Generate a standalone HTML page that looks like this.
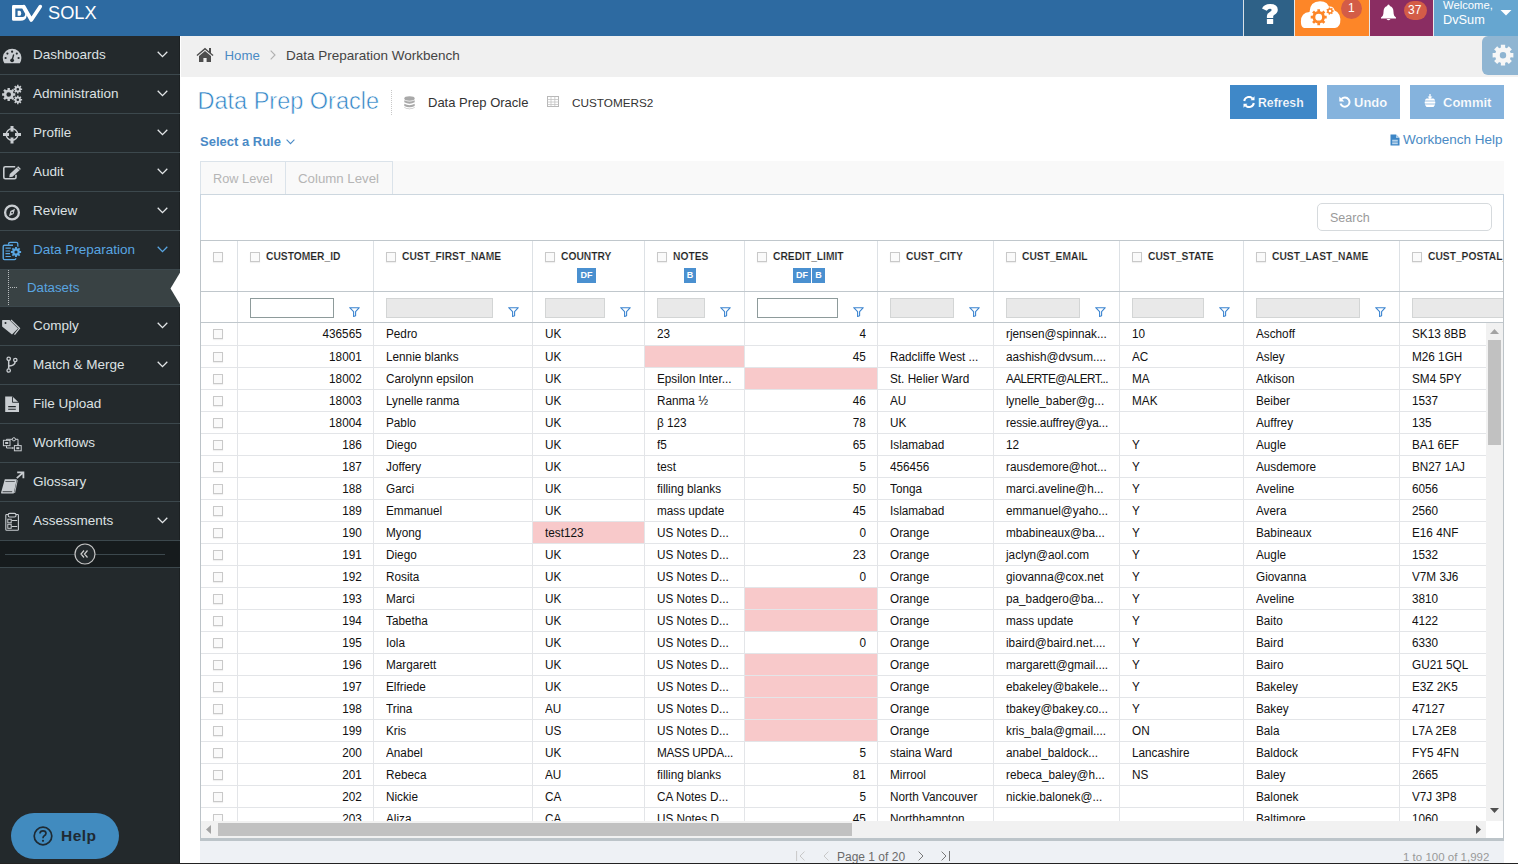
<!DOCTYPE html><html><head><meta charset="utf-8"><style>
*{box-sizing:border-box;margin:0;padding:0}
html,body{width:1518px;height:864px;overflow:hidden;background:#fff;font-family:"Liberation Sans",sans-serif;position:relative}
.abs{position:absolute}
svg{display:block}
.si{position:absolute;left:0;width:180px;height:39px;border-bottom:1px solid #3c484d;color:#dde1e3;font-size:13.5px}
.si .t{position:absolute;left:33px;top:11px;line-height:16px;white-space:nowrap}
.si .ch{position:absolute;left:157px;top:15px}
.si .ic{position:absolute}
.tx{position:absolute;white-space:nowrap;line-height:1}
.c{position:absolute;font-size:12.5px;color:#111;white-space:nowrap;line-height:14px}
.c span{display:inline-block;transform:scaleX(0.94);transform-origin:0 0}
.c.r span{transform-origin:100% 0}
.vb{position:absolute;top:241px;width:1px;background:#dde1e5}
.hb{position:absolute;left:201px;height:1px;background:#dfe2e5}
.cb{position:absolute;width:10px;height:10px;border:1px solid #c9c9c9;background:#fafafa;box-shadow:0 1px 1px rgba(0,0,0,0.06)}
.fi{position:absolute;top:298px;height:20px;border:1px solid #d3d5d5;background:#e9e9e9}
.fi.on{background:#fff;border-color:#8e9b9b}
.hd{position:absolute;top:252px;font-size:10.25px;font-weight:bold;color:#222;white-space:nowrap;line-height:10px;-webkit-text-stroke:0.15px #fff}
.bdg{position:absolute;top:268px;height:15px;background:#4a90d0;color:#fff;font-size:9px;font-weight:bold;line-height:15px;text-align:center}
.pink{position:absolute;background:#f8c9ca}
</style></head><body>
<div class="abs" style="left:0;top:0;width:1518px;height:36px;background:#2d6aa1"></div>
<svg class="abs" style="left:10px;top:3px" width="35" height="20" viewBox="0 0 35 20">
<path d="M2 3.4 Q2 2 3.4 2 H13 L16.5 8.5 L16.8 12.5 Q16 17.8 10.5 17.8 H3.4 Q2 17.8 2 16.4 Z" fill="#fff"/>
<path d="M5.3 5.6 H12.3 L15.2 10.8 Q15.2 14.1 12.5 14.1 H5.3 Z" fill="#2d6aa1"/>
<path d="M7.6 7.7 H9.8 Q11.2 7.7 11.2 10.2 Q11.2 12.7 9.8 12.7 H7.6 Z" fill="#fff"/>
<path d="M13.8 3.6 L21.3 17 L30.3 3.6" fill="none" stroke="#fff" stroke-width="3.6" stroke-linecap="round" stroke-linejoin="round"/>
</svg>
<div class="tx" style="left:48px;top:3px;font-size:18.25px;color:#fff;line-height:20px">SOLX</div>
<div class="abs" style="left:1243px;top:0;width:1px;height:36px;background:#d8e0e6"></div>
<div class="abs" style="left:1244px;top:0;width:50px;height:36px;background:#2e6187"></div>
<div class="abs" style="left:1294px;top:0;width:1px;height:36px;background:#e8e8e8"></div>
<div class="abs" style="left:1295px;top:0;width:74px;height:36px;background:#fd8628"></div>
<div class="abs" style="left:1369px;top:0;width:1px;height:36px;background:#e8e8e8"></div>
<div class="abs" style="left:1370px;top:0;width:63px;height:36px;background:#8a2d62"></div>
<div class="abs" style="left:1433px;top:0;width:1px;height:36px;background:#e8e8e8"></div>
<div class="abs" style="left:1434px;top:0;width:84px;height:36px;background:#66a6d0"></div>
<svg class="abs" style="left:1261px;top:3px" width="18" height="22" viewBox="0 0 18 22"><path d="M1 5.5 Q3 0.9 9 0.9 Q16.8 0.9 16.8 6.8 Q16.8 10 13.5 11.8 Q12.2 12.5 12.2 13.5 V15 H5.9 V13 Q5.9 10.6 8.5 9.3 Q10.6 8.2 10.6 7.1 Q10.6 5.8 8.9 5.8 Q7.2 5.8 5.7 7.8 Z" fill="#fff"/><rect x="5.9" y="16" width="6.3" height="5" rx="0.5" fill="#fff"/></svg>
<svg class="abs" style="left:1300px;top:0px" width="42" height="30" viewBox="0 0 42 30">
<path d="M4 27.9 Q0.9 27.5 0.9 21.5 Q0.9 12.5 9.5 11.9 Q10 1.2 20 1.2 Q28.5 1.2 29.7 9.5 Q39.5 9.8 40.4 19 Q40.6 27.5 35 27.9 Z" fill="#fff"/>
<path d="M24.76 15.87 L26.69 15.85 L26.69 18.55 L24.76 18.53 L24.43 19.57 L23.92 20.54 L25.30 21.90 L23.40 23.80 L22.04 22.42 L21.07 22.93 L20.03 23.26 L20.05 25.19 L17.35 25.19 L17.37 23.26 L16.33 22.93 L15.36 22.42 L14.00 23.80 L12.10 21.90 L13.48 20.54 L12.97 19.57 L12.64 18.53 L10.71 18.55 L10.71 15.85 L12.64 15.87 L12.97 14.83 L13.48 13.86 L12.10 12.50 L14.00 10.60 L15.36 11.98 L16.33 11.47 L17.37 11.14 L17.35 9.21 L20.05 9.21 L20.03 11.14 L21.07 11.47 L22.04 11.98 L23.40 10.60 L25.30 12.50 L23.92 13.86 L24.43 14.83 Z M22.10 17.20 A3.4 3.4 0 1 0 15.30 17.20 A3.4 3.4 0 1 0 22.10 17.20 Z" fill="#fd8628" fill-rule="evenodd"/>
<circle cx="30" cy="11" r="4.6" fill="#fff"/>
<path d="M32.70 10.25 L33.62 10.23 L33.62 11.77 L32.70 11.75 L32.52 12.21 L32.27 12.64 L32.86 13.35 L31.65 14.31 L31.09 13.58 L30.62 13.73 L30.13 13.80 L29.95 14.70 L28.44 14.36 L28.67 13.46 L28.25 13.19 L27.90 12.85 L27.07 13.26 L26.41 11.88 L27.24 11.49 L27.20 11.00 L27.24 10.51 L26.41 10.12 L27.07 8.74 L27.90 9.15 L28.25 8.81 L28.67 8.54 L28.44 7.64 L29.95 7.30 L30.13 8.20 L30.62 8.27 L31.09 8.42 L31.65 7.69 L32.86 8.65 L32.27 9.36 L32.52 9.79 Z M31.30 11.00 A1.3 1.3 0 1 0 28.70 11.00 A1.3 1.3 0 1 0 31.30 11.00 Z" fill="#fd8628" fill-rule="evenodd"/>
</svg>
<div class="abs" style="left:1341px;top:-2px;width:21px;height:21px;border-radius:50%;background:#d35c47"></div>
<div class="tx" style="left:1348px;top:2px;font-size:12px;color:#fff;line-height:12px">1</div>
<svg class="abs" style="left:1380px;top:4px" width="17" height="17" viewBox="0 0 17 17">
<path d="M8.5 0.5 Q9.8 0.5 9.8 2 Q13.5 3 13.5 8 Q13.5 12 16 13.5 V14.5 H1 V13.5 Q3.5 12 3.5 8 Q3.5 3 7.2 2 Q7.2 0.5 8.5 0.5 Z" fill="#fff"/>
<path d="M6.5 15 Q8.5 17.5 10.5 15 Z" fill="#fff"/></svg>
<div class="abs" style="left:1404px;top:1px;width:23px;height:19px;border-radius:9.5px;background:#d35c47"></div>
<div class="tx" style="left:1408px;top:4px;font-size:12px;color:#fff;line-height:12px">37</div>
<div class="tx" style="left:1443px;top:-1px;font-size:11.25px;color:#fff;line-height:12px">Welcome,</div>
<div class="tx" style="left:1443px;top:13px;font-size:12.75px;color:#fff;line-height:13px">DvSum</div>
<svg class="abs" style="left:1500px;top:10px" width="12" height="6" viewBox="0 0 12 6"><path d="M0.5 0 H11.5 L6 5.5 Z" fill="#fff"/></svg>
<div class="abs" style="left:0;top:36px;width:180px;height:828px;background:#23292c"></div>
<div class="abs" style="left:179px;top:36px;width:1px;height:828px;background:#1c2123"></div>
<div class="si" style="top:36px;height:39px;color:#dde1e3"><span class="t">Dashboards</span><span class="ch"><svg width="11" height="7" viewBox="0 0 11 7"><path d="M0.7 0.7 L5.5 5.6 L10.3 0.7" fill="none" stroke="#e3e6e8" stroke-width="1.3"/></svg></span></div>
<div class="si" style="top:75px;height:39px;color:#dde1e3"><span class="t">Administration</span><span class="ch"><svg width="11" height="7" viewBox="0 0 11 7"><path d="M0.7 0.7 L5.5 5.6 L10.3 0.7" fill="none" stroke="#e3e6e8" stroke-width="1.3"/></svg></span></div>
<div class="si" style="top:114px;height:39px;color:#dde1e3"><span class="t">Profile</span><span class="ch"><svg width="11" height="7" viewBox="0 0 11 7"><path d="M0.7 0.7 L5.5 5.6 L10.3 0.7" fill="none" stroke="#e3e6e8" stroke-width="1.3"/></svg></span></div>
<div class="si" style="top:153px;height:39px;color:#dde1e3"><span class="t">Audit</span><span class="ch"><svg width="11" height="7" viewBox="0 0 11 7"><path d="M0.7 0.7 L5.5 5.6 L10.3 0.7" fill="none" stroke="#e3e6e8" stroke-width="1.3"/></svg></span></div>
<div class="si" style="top:192px;height:39px;color:#dde1e3"><span class="t">Review</span><span class="ch"><svg width="11" height="7" viewBox="0 0 11 7"><path d="M0.7 0.7 L5.5 5.6 L10.3 0.7" fill="none" stroke="#e3e6e8" stroke-width="1.3"/></svg></span></div>
<div class="si" style="top:231px;height:39px;color:#59a6e2"><span class="t">Data Preparation</span><span class="ch"><svg width="11" height="7" viewBox="0 0 11 7"><path d="M0.7 0.7 L5.5 5.6 L10.3 0.7" fill="none" stroke="#59a6e2" stroke-width="1.3"/></svg></span></div>
<div class="abs" style="left:0;top:270px;width:180px;height:37px;background:#394244;border-bottom:1px solid #3c484d"></div>
<div class="abs" style="left:8px;top:270px;width:1px;height:36px;background:repeating-linear-gradient(to bottom,#b8bcbe 0 1px,transparent 1px 2px)"></div>
<div class="abs" style="left:10px;top:287px;width:8px;height:1px;background:repeating-linear-gradient(to right,#b8bcbe 0 1px,transparent 1px 2px)"></div>
<div class="tx" style="left:27px;top:281px;font-size:13.25px;color:#59a6e2;line-height:14px">Datasets</div>
<svg class="abs" style="left:170px;top:271px" width="11" height="35" viewBox="0 0 11 35"><path d="M11 0 L0.5 17.5 L11 35 Z" fill="#fff"/></svg>
<div class="si" style="top:307px;height:39px;color:#dde1e3"><span class="t">Comply</span><span class="ch"><svg width="11" height="7" viewBox="0 0 11 7"><path d="M0.7 0.7 L5.5 5.6 L10.3 0.7" fill="none" stroke="#e3e6e8" stroke-width="1.3"/></svg></span></div>
<div class="si" style="top:346px;height:39px;color:#dde1e3"><span class="t">Match &amp; Merge</span><span class="ch"><svg width="11" height="7" viewBox="0 0 11 7"><path d="M0.7 0.7 L5.5 5.6 L10.3 0.7" fill="none" stroke="#e3e6e8" stroke-width="1.3"/></svg></span></div>
<div class="si" style="top:385px;height:39px;color:#dde1e3"><span class="t">File Upload</span></div>
<div class="si" style="top:424px;height:39px;color:#dde1e3"><span class="t">Workflows</span></div>
<div class="si" style="top:463px;height:39px;color:#dde1e3"><span class="t">Glossary</span></div>
<div class="si" style="top:502px;height:39px;color:#dde1e3"><span class="t">Assessments</span><span class="ch"><svg width="11" height="7" viewBox="0 0 11 7"><path d="M0.7 0.7 L5.5 5.6 L10.3 0.7" fill="none" stroke="#e3e6e8" stroke-width="1.3"/></svg></span></div>
<div class="abs" style="left:0;top:541px;width:180px;height:26px;background:#161b1d"></div>
<div class="abs" style="left:0;top:567px;width:180px;height:1px;background:#3c484d"></div>
<div class="abs" style="left:5px;top:554px;width:160px;height:1px;background:#3c484d"></div>
<svg class="abs" style="left:74px;top:543px" width="22" height="22" viewBox="0 0 22 22"><circle cx="11" cy="11" r="10" fill="#23292c" stroke="#c4c4c4" stroke-width="1.2"/><path d="M10 7.5 L7 11 L10 14.5 M13.5 7.5 L10.5 11 L13.5 14.5" fill="none" stroke="#d0d0d0" stroke-width="1.2"/></svg>
<svg class="abs" style="left:0;top:44px" width="26" height="26" viewBox="0 44 26 26"><path d="M4.4 63.2 A9.3 9.3 0 1 1 19.8 63.2 Z" fill="#c9cdd1"/>
<circle cx="12.1" cy="51.7" r="1.1" fill="#23292c"/><circle cx="7.4" cy="53.6" r="1.1" fill="#23292c"/><circle cx="16.8" cy="53.6" r="1.1" fill="#23292c"/>
<circle cx="5.6" cy="58" r="1.1" fill="#23292c"/><circle cx="18.6" cy="58" r="1.1" fill="#23292c"/>
<path d="M13.7 54.5 L12.3 59.5" stroke="#23292c" stroke-width="1.3"/><circle cx="12.1" cy="60.3" r="1.9" fill="#23292c"/></svg>
<svg class="abs" style="left:0;top:82px" width="26" height="26" viewBox="0 82 26 26"><path d="M13.46 93.35 L15.29 93.28 L15.29 95.72 L13.46 95.65 L13.23 96.38 L12.88 97.05 L14.22 98.29 L12.49 100.02 L11.25 98.68 L10.58 99.03 L9.85 99.26 L9.92 101.09 L7.48 101.09 L7.55 99.26 L6.82 99.03 L6.15 98.68 L4.91 100.02 L3.18 98.29 L4.52 97.05 L4.17 96.38 L3.94 95.65 L2.11 95.72 L2.11 93.28 L3.94 93.35 L4.17 92.62 L4.52 91.95 L3.18 90.71 L4.91 88.98 L6.15 90.32 L6.82 89.97 L7.55 89.74 L7.48 87.91 L9.92 87.91 L9.85 89.74 L10.58 89.97 L11.25 90.32 L12.49 88.98 L14.22 90.71 L12.88 91.95 L13.23 92.62 Z M11.00 94.50 A2.3 2.3 0 1 0 6.40 94.50 A2.3 2.3 0 1 0 11.00 94.50 Z" fill="#c9cdd1" fill-rule="evenodd"/><path d="M20.91 88.45 L22.13 88.40 L22.13 90.00 L20.91 89.95 L20.76 90.42 L20.53 90.87 L21.43 91.69 L20.29 92.83 L19.47 91.93 L19.02 92.16 L18.55 92.31 L18.60 93.53 L17.00 93.53 L17.05 92.31 L16.58 92.16 L16.13 91.93 L15.31 92.83 L14.17 91.69 L15.07 90.87 L14.84 90.42 L14.69 89.95 L13.47 90.00 L13.47 88.40 L14.69 88.45 L14.84 87.98 L15.07 87.53 L14.17 86.71 L15.31 85.57 L16.13 86.47 L16.58 86.24 L17.05 86.09 L17.00 84.87 L18.60 84.87 L18.55 86.09 L19.02 86.24 L19.47 86.47 L20.29 85.57 L21.43 86.71 L20.53 87.53 L20.76 87.98 Z M19.10 89.20 A1.3 1.3 0 1 0 16.50 89.20 A1.3 1.3 0 1 0 19.10 89.20 Z" fill="#c9cdd1" fill-rule="evenodd"/><path d="M20.91 99.05 L22.13 99.00 L22.13 100.60 L20.91 100.55 L20.76 101.02 L20.53 101.47 L21.43 102.29 L20.29 103.43 L19.47 102.53 L19.02 102.76 L18.55 102.91 L18.60 104.13 L17.00 104.13 L17.05 102.91 L16.58 102.76 L16.13 102.53 L15.31 103.43 L14.17 102.29 L15.07 101.47 L14.84 101.02 L14.69 100.55 L13.47 100.60 L13.47 99.00 L14.69 99.05 L14.84 98.58 L15.07 98.13 L14.17 97.31 L15.31 96.17 L16.13 97.07 L16.58 96.84 L17.05 96.69 L17.00 95.47 L18.60 95.47 L18.55 96.69 L19.02 96.84 L19.47 97.07 L20.29 96.17 L21.43 97.31 L20.53 98.13 L20.76 98.58 Z M19.10 99.80 A1.3 1.3 0 1 0 16.50 99.80 A1.3 1.3 0 1 0 19.10 99.80 Z" fill="#c9cdd1" fill-rule="evenodd"/></svg>
<svg class="abs" style="left:0;top:122px" width="26" height="26" viewBox="0 122 26 26"><circle cx="12" cy="134.5" r="5.8" fill="none" stroke="#c9cdd1" stroke-width="1.4"/>
<rect x="10.5" y="126" width="3" height="5.6" fill="#c9cdd1"/><rect x="10.5" y="137.5" width="3" height="6" fill="#c9cdd1"/>
<rect x="3" y="133" width="6" height="3" fill="#c9cdd1"/><rect x="15" y="133" width="6" height="3" fill="#c9cdd1"/>
<circle cx="12" cy="134.5" r="2.6" fill="#23292c"/></svg>
<svg class="abs" style="left:0;top:160px" width="26" height="26" viewBox="0 160 26 26"><path d="M15.2 166.8 H5.3 Q3.8 166.8 3.8 168.3 V177.3 Q3.8 178.8 5.3 178.8 H14.5 Q16 178.8 16 177.3 V174.8" fill="none" stroke="#c9cdd1" stroke-width="1.6"/>
<path d="M9.2 177.3 L9.8 174 L18.2 166.2 L20.9 168.9 L12.5 176.7 Z" fill="#c9cdd1"/>
<path d="M17 167.4 L19.7 170.1" stroke="#23292c" stroke-width="0.7"/></svg>
<svg class="abs" style="left:0;top:198px" width="26" height="26" viewBox="0 198 26 26"><circle cx="12" cy="212.5" r="6.9" fill="none" stroke="#c9cdd1" stroke-width="2.3"/>
<path d="M15 208.8 L13.6 214 L9 216.2 L10.4 211 Z" fill="#c9cdd1"/><circle cx="12.1" cy="212.6" r="0.9" fill="#23292c"/></svg>
<svg class="abs" style="left:0;top:237px" width="26" height="26" viewBox="0 237 26 26"><path d="M8.6 244.8 V243.8 Q8.6 242.3 10.1 242.3 H16.3 Q17.8 242.3 17.8 243.8 V247" fill="none" stroke="#59a6e2" stroke-width="1.3"/>
<path d="M13 245.2 H4.5 Q3.2 245.2 3.2 246.5 V258.3 Q3.2 259.6 4.5 259.6 H14.5 Q15.8 259.6 15.8 258.3" fill="none" stroke="#59a6e2" stroke-width="1.4"/>
<path d="M5.5 248.2 H10.8 M5.5 251 H10 M5.5 253.6 H10 M5.5 256.5 H10.8" stroke="#59a6e2" stroke-width="1.2"/>
<circle cx="16" cy="252" r="5.8" fill="#23292c"/><path d="M19.69 251.11 L21.11 251.05 L21.11 252.95 L19.69 252.89 L19.51 253.45 L19.24 253.98 L20.29 254.94 L18.94 256.29 L17.98 255.24 L17.45 255.51 L16.89 255.69 L16.95 257.11 L15.05 257.11 L15.11 255.69 L14.55 255.51 L14.02 255.24 L13.06 256.29 L11.71 254.94 L12.76 253.98 L12.49 253.45 L12.31 252.89 L10.89 252.95 L10.89 251.05 L12.31 251.11 L12.49 250.55 L12.76 250.02 L11.71 249.06 L13.06 247.71 L14.02 248.76 L14.55 248.49 L15.11 248.31 L15.05 246.89 L16.95 246.89 L16.89 248.31 L17.45 248.49 L17.98 248.76 L18.94 247.71 L20.29 249.06 L19.24 250.02 L19.51 250.55 Z M17.60 252.00 A1.6 1.6 0 1 0 14.40 252.00 A1.6 1.6 0 1 0 17.60 252.00 Z" fill="#59a6e2" fill-rule="evenodd"/></svg>
<svg class="abs" style="left:0;top:313px" width="26" height="26" viewBox="0 313 26 26"><path d="M2.1 320.5 Q2.1 319.9 2.7 319.9 H9.5 L18 328.4 L12 334.6 L2.1 326.6 Z" fill="#c9cdd1"/>
<circle cx="5.5" cy="323" r="1" fill="#23292c"/>
<path d="M11 320 L19.5 328.4 L14.5 334.6" fill="none" stroke="#c9cdd1" stroke-width="1.3"/></svg>
<svg class="abs" style="left:0;top:351px" width="26" height="26" viewBox="0 351 26 26"><circle cx="8.7" cy="358.8" r="1.7" fill="none" stroke="#c9cdd1" stroke-width="1.3"/>
<circle cx="15.3" cy="360" r="1.7" fill="none" stroke="#c9cdd1" stroke-width="1.3"/>
<circle cx="8.7" cy="370.5" r="1.7" fill="none" stroke="#c9cdd1" stroke-width="1.3"/>
<path d="M8.7 360.5 V368.8 M15.1 361.7 Q15 365.5 9 366" fill="none" stroke="#c9cdd1" stroke-width="1.5"/></svg>
<svg class="abs" style="left:0;top:391px" width="26" height="26" viewBox="0 391 26 26"><path d="M5.2 396.6 H12.5 L19 402.8 V412.1 H5.2 Z" fill="#c9cdd1"/>
<path d="M12.5 396.6 V402.3 H19" fill="none" stroke="#23292c" stroke-width="0.9"/>
<path d="M8.2 406.6 H15.8 M8.2 409.3 H15.8" stroke="#23292c" stroke-width="1.1"/></svg>
<svg class="abs" style="left:0;top:430px" width="26" height="26" viewBox="0 430 26 26"><rect x="3.4" y="440.3" width="6.6" height="5.4" fill="none" stroke="#c9cdd1" stroke-width="1"/>
<rect x="5.2" y="442" width="3" height="2" fill="#c9cdd1"/>
<rect x="14.4" y="445.6" width="6.8" height="5.2" fill="none" stroke="#c9cdd1" stroke-width="1"/>
<rect x="16.3" y="447.2" width="3" height="2" fill="#c9cdd1"/>
<circle cx="13.9" cy="439.3" r="1.6" fill="none" stroke="#c9cdd1" stroke-width="1"/>
<path d="M6.5 440.3 V439.3 H12.3 M15.5 439.3 H18 V444.5 M6.5 445.7 V448 H13.2" fill="none" stroke="#c9cdd1" stroke-width="1"/>
<path d="M16.8 443.7 L18 445.4 L19.2 443.7 Z M12.4 446.8 L14.1 448 L12.4 449.2 Z" fill="#c9cdd1"/></svg>
<svg class="abs" style="left:0;top:469px" width="26" height="26" viewBox="0 469 26 26"><path d="M4.8 479.2 H16.8 L13.7 493.6 H1.7 Q0.8 493.6 1.1 492.6 Z" fill="#c9cdd1"/>
<path d="M17.3 480.3 L14.6 493" stroke="#c9cdd1" stroke-width="0.9"/>
<path d="M5.4 481.5 H14.8 M2.6 491.6 H12.2" stroke="#5c6064" stroke-width="1.2"/>
<path d="M16.8 478.2 L23 472.6 M17.2 472.3 H23.4 V478.2" fill="none" stroke="#c9cdd1" stroke-width="1.8"/></svg>
<svg class="abs" style="left:0;top:509px" width="26" height="26" viewBox="0 509 26 26"><rect x="5.8" y="514.5" width="12.6" height="15.8" rx="0.8" fill="none" stroke="#c9cdd1" stroke-width="1.1"/>
<rect x="8.2" y="513.4" width="7.8" height="3.6" rx="1.5" fill="#23292c" stroke="#c9cdd1" stroke-width="1.1"/>
<rect x="7.8" y="519.2" width="3.4" height="3.6" fill="none" stroke="#c9cdd1" stroke-width="1"/>
<rect x="7.8" y="524.3" width="3.4" height="4" fill="none" stroke="#c9cdd1" stroke-width="1"/>
<path d="M11.6 520.5 H17.2 M11.6 526.5 H17.2" stroke="#c9cdd1" stroke-width="1"/></svg>
<div class="abs" style="left:11px;top:813px;width:108px;height:46px;border-radius:23px;background:#418bbf"></div>
<svg class="abs" style="left:33px;top:826px" width="20" height="20" viewBox="0 0 20 20"><circle cx="10" cy="10" r="8.8" fill="none" stroke="#1e2a33" stroke-width="1.7"/><path d="M7 7.5 Q7 4.8 10 4.8 Q13 4.8 13 7.3 Q13 9 11 10 Q10 10.5 10 12.3" fill="none" stroke="#1e2a33" stroke-width="1.7"/><circle cx="10" cy="14.8" r="1.1" fill="#1e2a33"/></svg>
<div class="tx" style="left:61px;top:828px;font-size:15.5px;font-weight:bold;color:#1e2a33;line-height:16px;letter-spacing:0.5px">Help</div>
<div class="abs" style="left:180px;top:36px;width:1px;height:828px;background:#fff"></div>
<div class="abs" style="left:181px;top:36px;width:1337px;height:41px;background:#f0f0f0"></div>
<svg class="abs" style="left:196px;top:47px" width="18" height="15" viewBox="0 0 18 15"><path d="M0.5 8 L9 0.8 L13 4.2 V1 H15 V5.9 L17.5 8 L16.6 9 L9 2.7 L1.4 9 Z" fill="#4d4d4d"/><path d="M3 9 L9 4 L15 9 V15 H10.6 V11 H7.4 V15 H3 Z" fill="#4d4d4d"/></svg>
<div class="tx" style="left:224.5px;top:49px;font-size:13.25px;color:#4a8ac4;line-height:14px">Home</div>
<svg class="abs" style="left:270px;top:50px" width="6" height="10" viewBox="0 0 6 10"><path d="M0.7 0.7 L5 5 L0.7 9.3" fill="none" stroke="#b0b0b0" stroke-width="1.1"/></svg>
<div class="tx" style="left:286px;top:49px;font-size:13.5px;color:#444;line-height:14px">Data Preparation Workbench</div>
<div class="abs" style="left:1482px;top:36px;width:36px;height:39px;background:#8fb5d2;border-radius:6px 0 0 6px"></div>
<svg class="abs" style="left:1482px;top:36px" width="36" height="39" viewBox="1482 36 36 39"><path d="M1510.62 53.11 L1513.37 53.02 L1513.37 57.38 L1510.62 57.29 L1510.30 58.22 L1509.87 59.11 L1511.88 61.00 L1508.80 64.08 L1506.91 62.07 L1506.02 62.50 L1505.09 62.82 L1505.18 65.57 L1500.82 65.57 L1500.91 62.82 L1499.98 62.50 L1499.09 62.07 L1497.20 64.08 L1494.12 61.00 L1496.13 59.11 L1495.70 58.22 L1495.38 57.29 L1492.63 57.38 L1492.63 53.02 L1495.38 53.11 L1495.70 52.18 L1496.13 51.29 L1494.12 49.40 L1497.20 46.32 L1499.09 48.33 L1499.98 47.90 L1500.91 47.58 L1500.82 44.83 L1505.18 44.83 L1505.09 47.58 L1506.02 47.90 L1506.91 48.33 L1508.80 46.32 L1511.88 49.40 L1509.87 51.29 L1510.30 52.18 Z M1506.20 55.20 A3.2 3.2 0 1 0 1499.80 55.20 A3.2 3.2 0 1 0 1506.20 55.20 Z" fill="#f7f7f7" fill-rule="evenodd"/></svg>
<div class="tx" style="left:197.5px;top:89px;font-size:23.5px;color:#2f84c6;line-height:24px;-webkit-text-stroke:0.55px #fff">Data Prep Oracle</div>
<div class="abs" style="left:391px;top:90px;width:1px;height:25px;background:repeating-linear-gradient(to bottom,#c8c8c8 0 1px,transparent 1px 2px)"></div>
<svg class="abs" style="left:404px;top:96px" width="11" height="14" viewBox="0 0 11 14"><ellipse cx="5.5" cy="2.5" rx="5.2" ry="2.2" fill="#a9a9a9"/><path d="M0.3 4.2 Q5.5 7 10.7 4.2 V6.3 Q5.5 9 0.3 6.3 Z M0.3 7.8 Q5.5 10.5 10.7 7.8 V9.9 Q5.5 12.6 0.3 9.9 Z M0.3 11.3 Q5.5 14 10.7 11.3 V11.8 Q5.5 14.5 0.3 11.8 Z" fill="#a9a9a9"/></svg>
<div class="tx" style="left:428px;top:96px;font-size:13px;color:#333;line-height:14px">Data Prep Oracle</div>
<svg class="abs" style="left:547px;top:96px" width="12" height="11" viewBox="0 0 12 11"><rect x="0.5" y="0.5" width="11" height="10" fill="none" stroke="#b8b8b8"/><path d="M0.5 3.5 H11.5 M0.5 6 H11.5 M0.5 8.5 H11.5 M4 0.5 V10.5 M7.8 0.5 V10.5" stroke="#c4c4c4" stroke-width="0.8"/></svg>
<div class="tx" style="left:572px;top:96px;font-size:11.75px;color:#333;line-height:14px">CUSTOMERS2</div>
<div class="abs" style="left:1230px;top:85px;width:87px;height:34px;background:#3f88c8"></div>
<svg class="abs" style="left:1243px;top:96px" width="12" height="12" viewBox="0 0 12 12"><path d="M1.2 5 A4.8 4.8 0 0 1 9.6 2.6" fill="none" stroke="#fff" stroke-width="2"/><path d="M7.5 4.3 L11.5 4.3 L11.5 0.3 Z" fill="#fff"/><path d="M10.8 7 A4.8 4.8 0 0 1 2.4 9.4" fill="none" stroke="#fff" stroke-width="2"/><path d="M4.5 7.7 L0.5 7.7 L0.5 11.7 Z" fill="#fff"/></svg>
<div class="tx" style="left:1258px;top:96px;font-size:12.25px;font-weight:bold;color:#fff;-webkit-text-stroke:0.2px #3f88c8;line-height:14px">Refresh</div>
<div class="abs" style="left:1327px;top:85px;width:73px;height:34px;background:#85b3dd"></div>
<svg class="abs" style="left:1339px;top:96px" width="12" height="12" viewBox="0 0 12 12"><path d="M2.5 3 A4.6 4.6 0 1 1 1.5 7.5" fill="none" stroke="#fff" stroke-width="2"/><path d="M0.3 0.5 V5.5 H5.3 Z" fill="#fff"/></svg>
<div class="tx" style="left:1354px;top:96px;font-size:13px;font-weight:bold;color:#fff;-webkit-text-stroke:0.2px #85b3dd;line-height:14px">Undo</div>
<div class="abs" style="left:1410px;top:85px;width:94px;height:34px;background:#85b3dd"></div>
<svg class="abs" style="left:1424px;top:93px" width="12" height="15" viewBox="0 0 12 15"><path d="M6 1 V5.2" stroke="#fff" stroke-width="1.3"/><path d="M3.6 3.6 H8.4 L6 6.2 Z" fill="#fff"/><path d="M2.5 5.5 H9.5 Q11.3 6.2 11.3 9.6 Q11.3 13 9.5 14 H2.5 Q0.7 13 0.7 9.6 Q0.7 6.2 2.5 5.5 Z" fill="#fff"/><path d="M0.5 8 H11.5 M0.5 11 H11.5" stroke="#85b3dd" stroke-width="0.8"/></svg>
<div class="tx" style="left:1443px;top:96px;font-size:13px;font-weight:bold;color:#fff;-webkit-text-stroke:0.2px #85b3dd;line-height:14px">Commit</div>
<div class="tx" style="left:200px;top:135px;font-size:13px;font-weight:bold;color:#4a8ac6;line-height:14px">Select a Rule</div>
<svg class="abs" style="left:286px;top:139px" width="9" height="6" viewBox="0 0 9 6"><path d="M0.6 0.6 L4.5 4.6 L8.4 0.6" fill="none" stroke="#4a8ac6" stroke-width="1.1"/></svg>
<svg class="abs" style="left:1390px;top:134px" width="10" height="12" viewBox="0 0 10 12"><path d="M0.5 0.5 H6 L9.5 4 V11.5 H0.5 Z" fill="#3d86c6"/><path d="M6 0.5 V4 H9.5" fill="#a9cbe8"/><path d="M2.2 6.3 H7.8 M2.2 8 H7.8 M2.2 9.7 H7.8" stroke="#fff" stroke-width="0.8"/></svg>
<div class="tx" style="left:1403px;top:133px;font-size:13.5px;color:#4a8ac4;line-height:14px">Workbench Help</div>
<div class="abs" style="left:200px;top:161px;width:1304px;height:33px;background:#f9f9f9"></div>
<div class="abs" style="left:200px;top:161px;width:193px;height:33px;border:1px solid #dbe3ea;border-bottom:0"></div>
<div class="abs" style="left:285px;top:162px;width:1px;height:32px;background:#dbe3ea"></div>
<div class="abs" style="left:200px;top:194px;width:1304px;height:1px;background:#cdd7df"></div>
<div class="tx" style="left:213px;top:172px;font-size:12.75px;color:#b5b5b5;line-height:14px">Row Level</div>
<div class="tx" style="left:298px;top:172px;font-size:13.25px;color:#b5b5b5;line-height:14px">Column Level</div>
<div class="abs" style="left:200px;top:194px;width:1px;height:46px;background:#c6d3df"></div>
<div class="abs" style="left:1503px;top:194px;width:1px;height:46px;background:#c6d3df"></div>
<div class="abs" style="left:200px;top:240px;width:1px;height:600px;background:#bcc3c8"></div>
<div class="abs" style="left:1503px;top:240px;width:1px;height:600px;background:#bcc3c8"></div>
<div class="abs" style="left:1317px;top:203px;width:175px;height:28px;border:1px solid #d6dadd;border-radius:5px;background:#fff"></div>
<div class="tx" style="left:1330px;top:211px;font-size:12.5px;color:#9a9a9a;line-height:14px">Search</div>
<div class="abs" style="left:201px;top:240px;width:1302px;height:1px;background:#c0c7cc"></div>
<div class="abs" style="left:201px;top:291px;width:1302px;height:1px;background:#c0c7cc"></div>
<div class="abs" style="left:201px;top:322px;width:1302px;height:1px;background:#c0c7cc"></div>
<div class="vb" style="left:237px;height:50px"></div>
<div class="vb" style="left:237px;top:292px;height:30px"></div>
<div class="vb" style="left:373px;height:50px"></div>
<div class="vb" style="left:373px;top:292px;height:30px"></div>
<div class="vb" style="left:532px;height:50px"></div>
<div class="vb" style="left:532px;top:292px;height:30px"></div>
<div class="vb" style="left:644px;height:50px"></div>
<div class="vb" style="left:644px;top:292px;height:30px"></div>
<div class="vb" style="left:744px;height:50px"></div>
<div class="vb" style="left:744px;top:292px;height:30px"></div>
<div class="vb" style="left:877px;height:50px"></div>
<div class="vb" style="left:877px;top:292px;height:30px"></div>
<div class="vb" style="left:993px;height:50px"></div>
<div class="vb" style="left:993px;top:292px;height:30px"></div>
<div class="vb" style="left:1119px;height:50px"></div>
<div class="vb" style="left:1119px;top:292px;height:30px"></div>
<div class="vb" style="left:1243px;height:50px"></div>
<div class="vb" style="left:1243px;top:292px;height:30px"></div>
<div class="vb" style="left:1399px;height:50px"></div>
<div class="vb" style="left:1399px;top:292px;height:30px"></div>
<div class="abs" style="left:0;top:0;width:1503px;height:323px;overflow:hidden">
<div class="cb" style="left:213px;top:252px"></div>
<div class="cb" style="left:250px;top:252px"></div>
<div class="hd" style="left:266px">CUSTOMER_ID</div>
<div class="cb" style="left:386px;top:252px"></div>
<div class="hd" style="left:402px">CUST_FIRST_NAME</div>
<div class="cb" style="left:545px;top:252px"></div>
<div class="hd" style="left:561px">COUNTRY</div>
<div class="cb" style="left:657px;top:252px"></div>
<div class="hd" style="left:673px">NOTES</div>
<div class="cb" style="left:757px;top:252px"></div>
<div class="hd" style="left:773px">CREDIT_LIMIT</div>
<div class="cb" style="left:890px;top:252px"></div>
<div class="hd" style="left:906px">CUST_CITY</div>
<div class="cb" style="left:1006px;top:252px"></div>
<div class="hd" style="left:1022px">CUST_EMAIL</div>
<div class="cb" style="left:1132px;top:252px"></div>
<div class="hd" style="left:1148px">CUST_STATE</div>
<div class="cb" style="left:1256px;top:252px"></div>
<div class="hd" style="left:1272px">CUST_LAST_NAME</div>
<div class="cb" style="left:1412px;top:252px"></div>
<div class="hd" style="left:1428px">CUST_POSTAL_CODE</div>
<div class="bdg" style="left:577px;width:19px">DF</div>
<div class="bdg" style="left:684px;width:12px">B</div>
<div class="bdg" style="left:793px;width:18px">DF</div>
<div class="bdg" style="left:812px;width:13px">B</div>
<div class="fi on" style="left:250px;width:84px"></div>
<div class="abs" style="left:349px;top:307px"><svg width="11" height="10" viewBox="0 0 11 10"><path d="M0.7 0.7 H10.3 L6.6 4.6 V8.8 L4.6 9.5 V4.6 Z" fill="none" stroke="#3b84d0" stroke-width="1.1" stroke-linejoin="round"/></svg></div>
<div class="fi" style="left:386px;width:107px"></div>
<div class="abs" style="left:508px;top:307px"><svg width="11" height="10" viewBox="0 0 11 10"><path d="M0.7 0.7 H10.3 L6.6 4.6 V8.8 L4.6 9.5 V4.6 Z" fill="none" stroke="#3b84d0" stroke-width="1.1" stroke-linejoin="round"/></svg></div>
<div class="fi" style="left:545px;width:60px"></div>
<div class="abs" style="left:620px;top:307px"><svg width="11" height="10" viewBox="0 0 11 10"><path d="M0.7 0.7 H10.3 L6.6 4.6 V8.8 L4.6 9.5 V4.6 Z" fill="none" stroke="#3b84d0" stroke-width="1.1" stroke-linejoin="round"/></svg></div>
<div class="fi" style="left:657px;width:48px"></div>
<div class="abs" style="left:720px;top:307px"><svg width="11" height="10" viewBox="0 0 11 10"><path d="M0.7 0.7 H10.3 L6.6 4.6 V8.8 L4.6 9.5 V4.6 Z" fill="none" stroke="#3b84d0" stroke-width="1.1" stroke-linejoin="round"/></svg></div>
<div class="fi on" style="left:757px;width:81px"></div>
<div class="abs" style="left:853px;top:307px"><svg width="11" height="10" viewBox="0 0 11 10"><path d="M0.7 0.7 H10.3 L6.6 4.6 V8.8 L4.6 9.5 V4.6 Z" fill="none" stroke="#3b84d0" stroke-width="1.1" stroke-linejoin="round"/></svg></div>
<div class="fi" style="left:890px;width:64px"></div>
<div class="abs" style="left:969px;top:307px"><svg width="11" height="10" viewBox="0 0 11 10"><path d="M0.7 0.7 H10.3 L6.6 4.6 V8.8 L4.6 9.5 V4.6 Z" fill="none" stroke="#3b84d0" stroke-width="1.1" stroke-linejoin="round"/></svg></div>
<div class="fi" style="left:1006px;width:74px"></div>
<div class="abs" style="left:1095px;top:307px"><svg width="11" height="10" viewBox="0 0 11 10"><path d="M0.7 0.7 H10.3 L6.6 4.6 V8.8 L4.6 9.5 V4.6 Z" fill="none" stroke="#3b84d0" stroke-width="1.1" stroke-linejoin="round"/></svg></div>
<div class="fi" style="left:1132px;width:72px"></div>
<div class="abs" style="left:1219px;top:307px"><svg width="11" height="10" viewBox="0 0 11 10"><path d="M0.7 0.7 H10.3 L6.6 4.6 V8.8 L4.6 9.5 V4.6 Z" fill="none" stroke="#3b84d0" stroke-width="1.1" stroke-linejoin="round"/></svg></div>
<div class="fi" style="left:1256px;width:104px"></div>
<div class="abs" style="left:1375px;top:307px"><svg width="11" height="10" viewBox="0 0 11 10"><path d="M0.7 0.7 H10.3 L6.6 4.6 V8.8 L4.6 9.5 V4.6 Z" fill="none" stroke="#3b84d0" stroke-width="1.1" stroke-linejoin="round"/></svg></div>
<div class="fi" style="left:1412px;width:200px"></div>
</div>
<div class="abs" style="left:201px;top:323px;width:1285px;height:498px;overflow:hidden">
<div class="abs" style="left:0;top:22px;width:1285px;height:1px;background:#e3e5e8"></div>
<div class="cb" style="left:12px;top:6px"></div>
<div class="c r" style="left:37px;width:124px;top:4px;text-align:right"><span>436565</span></div>
<div class="c" style="left:184.5px;top:4px;"><span>Pedro</span></div>
<div class="c" style="left:343.5px;top:4px;"><span>UK</span></div>
<div class="c" style="left:455.5px;top:4px;"><span>23</span></div>
<div class="c r" style="left:544px;width:121px;top:4px;text-align:right"><span>4</span></div>
<div class="c" style="left:804.5px;top:4px;"><span>rjensen@spinnak...</span></div>
<div class="c" style="left:930.5px;top:4px;"><span>10</span></div>
<div class="c" style="left:1054.5px;top:4px;"><span>Aschoff</span></div>
<div class="c" style="left:1210.5px;top:4px;"><span>SK13 8BB</span></div>
<div class="abs" style="left:0;top:44px;width:1285px;height:1px;background:#e3e5e8"></div>
<div class="cb" style="left:12px;top:29px"></div>
<div class="c r" style="left:37px;width:124px;top:27px;text-align:right"><span>18001</span></div>
<div class="c" style="left:184.5px;top:27px;"><span>Lennie blanks</span></div>
<div class="c" style="left:343.5px;top:27px;"><span>UK</span></div>
<div class="pink" style="left:444px;top:23px;width:99px;height:21px"></div>
<div class="c r" style="left:544px;width:121px;top:27px;text-align:right"><span>45</span></div>
<div class="c" style="left:688.5px;top:27px;"><span>Radcliffe West ...</span></div>
<div class="c" style="left:804.5px;top:27px;"><span>aashish@dvsum....</span></div>
<div class="c" style="left:930.5px;top:27px;"><span>AC</span></div>
<div class="c" style="left:1054.5px;top:27px;"><span>Asley</span></div>
<div class="c" style="left:1210.5px;top:27px;"><span>M26 1GH</span></div>
<div class="abs" style="left:0;top:66px;width:1285px;height:1px;background:#e3e5e8"></div>
<div class="cb" style="left:12px;top:51px"></div>
<div class="c r" style="left:37px;width:124px;top:49px;text-align:right"><span>18002</span></div>
<div class="c" style="left:184.5px;top:49px;"><span>Carolynn epsilon</span></div>
<div class="c" style="left:343.5px;top:49px;"><span>UK</span></div>
<div class="c" style="left:455.5px;top:49px;"><span>Epsilon Inter...</span></div>
<div class="pink" style="left:544px;top:45px;width:132px;height:21px"></div>
<div class="c" style="left:688.5px;top:49px;"><span>St. Helier Ward</span></div>
<div class="c" style="left:804.5px;top:49px;letter-spacing:-0.629px;"><span>AALERTE@ALERT...</span></div>
<div class="c" style="left:930.5px;top:49px;"><span>MA</span></div>
<div class="c" style="left:1054.5px;top:49px;"><span>Atkison</span></div>
<div class="c" style="left:1210.5px;top:49px;"><span>SM4 5PY</span></div>
<div class="abs" style="left:0;top:88px;width:1285px;height:1px;background:#e3e5e8"></div>
<div class="cb" style="left:12px;top:73px"></div>
<div class="c r" style="left:37px;width:124px;top:71px;text-align:right"><span>18003</span></div>
<div class="c" style="left:184.5px;top:71px;"><span>Lynelle ranma</span></div>
<div class="c" style="left:343.5px;top:71px;"><span>UK</span></div>
<div class="c" style="left:455.5px;top:71px;"><span>Ranma ½</span></div>
<div class="c r" style="left:544px;width:121px;top:71px;text-align:right"><span>46</span></div>
<div class="c" style="left:688.5px;top:71px;"><span>AU</span></div>
<div class="c" style="left:804.5px;top:71px;"><span>lynelle_baber@g...</span></div>
<div class="c" style="left:930.5px;top:71px;"><span>MAK</span></div>
<div class="c" style="left:1054.5px;top:71px;"><span>Beiber</span></div>
<div class="c" style="left:1210.5px;top:71px;"><span>1537</span></div>
<div class="abs" style="left:0;top:110px;width:1285px;height:1px;background:#e3e5e8"></div>
<div class="cb" style="left:12px;top:95px"></div>
<div class="c r" style="left:37px;width:124px;top:93px;text-align:right"><span>18004</span></div>
<div class="c" style="left:184.5px;top:93px;"><span>Pablo</span></div>
<div class="c" style="left:343.5px;top:93px;"><span>UK</span></div>
<div class="c" style="left:455.5px;top:93px;"><span>β 123</span></div>
<div class="c r" style="left:544px;width:121px;top:93px;text-align:right"><span>78</span></div>
<div class="c" style="left:688.5px;top:93px;"><span>UK</span></div>
<div class="c" style="left:804.5px;top:93px;letter-spacing:-0.129px;"><span>ressie.auffrey@ya...</span></div>
<div class="c" style="left:1054.5px;top:93px;"><span>Auffrey</span></div>
<div class="c" style="left:1210.5px;top:93px;"><span>135</span></div>
<div class="abs" style="left:0;top:132px;width:1285px;height:1px;background:#e3e5e8"></div>
<div class="cb" style="left:12px;top:117px"></div>
<div class="c r" style="left:37px;width:124px;top:115px;text-align:right"><span>186</span></div>
<div class="c" style="left:184.5px;top:115px;"><span>Diego</span></div>
<div class="c" style="left:343.5px;top:115px;"><span>UK</span></div>
<div class="c" style="left:455.5px;top:115px;"><span>f5</span></div>
<div class="c r" style="left:544px;width:121px;top:115px;text-align:right"><span>65</span></div>
<div class="c" style="left:688.5px;top:115px;"><span>Islamabad</span></div>
<div class="c" style="left:804.5px;top:115px;"><span>12</span></div>
<div class="c" style="left:930.5px;top:115px;"><span>Y</span></div>
<div class="c" style="left:1054.5px;top:115px;"><span>Augle</span></div>
<div class="c" style="left:1210.5px;top:115px;"><span>BA1 6EF</span></div>
<div class="abs" style="left:0;top:154px;width:1285px;height:1px;background:#e3e5e8"></div>
<div class="cb" style="left:12px;top:139px"></div>
<div class="c r" style="left:37px;width:124px;top:137px;text-align:right"><span>187</span></div>
<div class="c" style="left:184.5px;top:137px;"><span>Joffery</span></div>
<div class="c" style="left:343.5px;top:137px;"><span>UK</span></div>
<div class="c" style="left:455.5px;top:137px;"><span>test</span></div>
<div class="c r" style="left:544px;width:121px;top:137px;text-align:right"><span>5</span></div>
<div class="c" style="left:688.5px;top:137px;"><span>456456</span></div>
<div class="c" style="left:804.5px;top:137px;"><span>rausdemore@hot...</span></div>
<div class="c" style="left:930.5px;top:137px;"><span>Y</span></div>
<div class="c" style="left:1054.5px;top:137px;"><span>Ausdemore</span></div>
<div class="c" style="left:1210.5px;top:137px;"><span>BN27 1AJ</span></div>
<div class="abs" style="left:0;top:176px;width:1285px;height:1px;background:#e3e5e8"></div>
<div class="cb" style="left:12px;top:161px"></div>
<div class="c r" style="left:37px;width:124px;top:159px;text-align:right"><span>188</span></div>
<div class="c" style="left:184.5px;top:159px;"><span>Garci</span></div>
<div class="c" style="left:343.5px;top:159px;"><span>UK</span></div>
<div class="c" style="left:455.5px;top:159px;"><span>filling blanks</span></div>
<div class="c r" style="left:544px;width:121px;top:159px;text-align:right"><span>50</span></div>
<div class="c" style="left:688.5px;top:159px;"><span>Tonga</span></div>
<div class="c" style="left:804.5px;top:159px;"><span>marci.aveline@h...</span></div>
<div class="c" style="left:930.5px;top:159px;"><span>Y</span></div>
<div class="c" style="left:1054.5px;top:159px;"><span>Aveline</span></div>
<div class="c" style="left:1210.5px;top:159px;"><span>6056</span></div>
<div class="abs" style="left:0;top:198px;width:1285px;height:1px;background:#e3e5e8"></div>
<div class="cb" style="left:12px;top:183px"></div>
<div class="c r" style="left:37px;width:124px;top:181px;text-align:right"><span>189</span></div>
<div class="c" style="left:184.5px;top:181px;"><span>Emmanuel</span></div>
<div class="c" style="left:343.5px;top:181px;"><span>UK</span></div>
<div class="c" style="left:455.5px;top:181px;"><span>mass update</span></div>
<div class="c r" style="left:544px;width:121px;top:181px;text-align:right"><span>45</span></div>
<div class="c" style="left:688.5px;top:181px;"><span>Islamabad</span></div>
<div class="c" style="left:804.5px;top:181px;letter-spacing:-0.003px;"><span>emmanuel@yaho...</span></div>
<div class="c" style="left:930.5px;top:181px;"><span>Y</span></div>
<div class="c" style="left:1054.5px;top:181px;"><span>Avera</span></div>
<div class="c" style="left:1210.5px;top:181px;"><span>2560</span></div>
<div class="abs" style="left:0;top:220px;width:1285px;height:1px;background:#e3e5e8"></div>
<div class="cb" style="left:12px;top:205px"></div>
<div class="c r" style="left:37px;width:124px;top:203px;text-align:right"><span>190</span></div>
<div class="c" style="left:184.5px;top:203px;"><span>Myong</span></div>
<div class="pink" style="left:332px;top:199px;width:111px;height:21px"></div>
<div class="c" style="left:343.5px;top:203px;"><span>test123</span></div>
<div class="c" style="left:455.5px;top:203px;"><span>US Notes D...</span></div>
<div class="c r" style="left:544px;width:121px;top:203px;text-align:right"><span>0</span></div>
<div class="c" style="left:688.5px;top:203px;"><span>Orange</span></div>
<div class="c" style="left:804.5px;top:203px;"><span>mbabineaux@ba...</span></div>
<div class="c" style="left:930.5px;top:203px;"><span>Y</span></div>
<div class="c" style="left:1054.5px;top:203px;"><span>Babineaux</span></div>
<div class="c" style="left:1210.5px;top:203px;"><span>E16 4NF</span></div>
<div class="abs" style="left:0;top:242px;width:1285px;height:1px;background:#e3e5e8"></div>
<div class="cb" style="left:12px;top:227px"></div>
<div class="c r" style="left:37px;width:124px;top:225px;text-align:right"><span>191</span></div>
<div class="c" style="left:184.5px;top:225px;"><span>Diego</span></div>
<div class="c" style="left:343.5px;top:225px;"><span>UK</span></div>
<div class="c" style="left:455.5px;top:225px;"><span>US Notes D...</span></div>
<div class="c r" style="left:544px;width:121px;top:225px;text-align:right"><span>23</span></div>
<div class="c" style="left:688.5px;top:225px;"><span>Orange</span></div>
<div class="c" style="left:804.5px;top:225px;"><span>jaclyn@aol.com</span></div>
<div class="c" style="left:930.5px;top:225px;"><span>Y</span></div>
<div class="c" style="left:1054.5px;top:225px;"><span>Augle</span></div>
<div class="c" style="left:1210.5px;top:225px;"><span>1532</span></div>
<div class="abs" style="left:0;top:264px;width:1285px;height:1px;background:#e3e5e8"></div>
<div class="cb" style="left:12px;top:249px"></div>
<div class="c r" style="left:37px;width:124px;top:247px;text-align:right"><span>192</span></div>
<div class="c" style="left:184.5px;top:247px;"><span>Rosita</span></div>
<div class="c" style="left:343.5px;top:247px;"><span>UK</span></div>
<div class="c" style="left:455.5px;top:247px;"><span>US Notes D...</span></div>
<div class="c r" style="left:544px;width:121px;top:247px;text-align:right"><span>0</span></div>
<div class="c" style="left:688.5px;top:247px;"><span>Orange</span></div>
<div class="c" style="left:804.5px;top:247px;"><span>giovanna@cox.net</span></div>
<div class="c" style="left:930.5px;top:247px;"><span>Y</span></div>
<div class="c" style="left:1054.5px;top:247px;"><span>Giovanna</span></div>
<div class="c" style="left:1210.5px;top:247px;"><span>V7M 3J6</span></div>
<div class="abs" style="left:0;top:286px;width:1285px;height:1px;background:#e3e5e8"></div>
<div class="cb" style="left:12px;top:271px"></div>
<div class="c r" style="left:37px;width:124px;top:269px;text-align:right"><span>193</span></div>
<div class="c" style="left:184.5px;top:269px;"><span>Marci</span></div>
<div class="c" style="left:343.5px;top:269px;"><span>UK</span></div>
<div class="c" style="left:455.5px;top:269px;"><span>US Notes D...</span></div>
<div class="pink" style="left:544px;top:265px;width:132px;height:21px"></div>
<div class="c" style="left:688.5px;top:269px;"><span>Orange</span></div>
<div class="c" style="left:804.5px;top:269px;"><span>pa_badgero@ba...</span></div>
<div class="c" style="left:930.5px;top:269px;"><span>Y</span></div>
<div class="c" style="left:1054.5px;top:269px;"><span>Aveline</span></div>
<div class="c" style="left:1210.5px;top:269px;"><span>3810</span></div>
<div class="abs" style="left:0;top:308px;width:1285px;height:1px;background:#e3e5e8"></div>
<div class="cb" style="left:12px;top:293px"></div>
<div class="c r" style="left:37px;width:124px;top:291px;text-align:right"><span>194</span></div>
<div class="c" style="left:184.5px;top:291px;"><span>Tabetha</span></div>
<div class="c" style="left:343.5px;top:291px;"><span>UK</span></div>
<div class="c" style="left:455.5px;top:291px;"><span>US Notes D...</span></div>
<div class="pink" style="left:544px;top:287px;width:132px;height:21px"></div>
<div class="c" style="left:688.5px;top:291px;"><span>Orange</span></div>
<div class="c" style="left:804.5px;top:291px;"><span>mass update</span></div>
<div class="c" style="left:930.5px;top:291px;"><span>Y</span></div>
<div class="c" style="left:1054.5px;top:291px;"><span>Baito</span></div>
<div class="c" style="left:1210.5px;top:291px;"><span>4122</span></div>
<div class="abs" style="left:0;top:330px;width:1285px;height:1px;background:#e3e5e8"></div>
<div class="cb" style="left:12px;top:315px"></div>
<div class="c r" style="left:37px;width:124px;top:313px;text-align:right"><span>195</span></div>
<div class="c" style="left:184.5px;top:313px;"><span>Iola</span></div>
<div class="c" style="left:343.5px;top:313px;"><span>UK</span></div>
<div class="c" style="left:455.5px;top:313px;"><span>US Notes D...</span></div>
<div class="c r" style="left:544px;width:121px;top:313px;text-align:right"><span>0</span></div>
<div class="c" style="left:688.5px;top:313px;"><span>Orange</span></div>
<div class="c" style="left:804.5px;top:313px;"><span>ibaird@baird.net....</span></div>
<div class="c" style="left:930.5px;top:313px;"><span>Y</span></div>
<div class="c" style="left:1054.5px;top:313px;"><span>Baird</span></div>
<div class="c" style="left:1210.5px;top:313px;"><span>6330</span></div>
<div class="abs" style="left:0;top:352px;width:1285px;height:1px;background:#e3e5e8"></div>
<div class="cb" style="left:12px;top:337px"></div>
<div class="c r" style="left:37px;width:124px;top:335px;text-align:right"><span>196</span></div>
<div class="c" style="left:184.5px;top:335px;"><span>Margarett</span></div>
<div class="c" style="left:343.5px;top:335px;"><span>UK</span></div>
<div class="c" style="left:455.5px;top:335px;"><span>US Notes D...</span></div>
<div class="pink" style="left:544px;top:331px;width:132px;height:21px"></div>
<div class="c" style="left:688.5px;top:335px;"><span>Orange</span></div>
<div class="c" style="left:804.5px;top:335px;letter-spacing:-0.073px;"><span>margarett@gmail....</span></div>
<div class="c" style="left:930.5px;top:335px;"><span>Y</span></div>
<div class="c" style="left:1054.5px;top:335px;"><span>Bairo</span></div>
<div class="c" style="left:1210.5px;top:335px;"><span>GU21 5QL</span></div>
<div class="abs" style="left:0;top:374px;width:1285px;height:1px;background:#e3e5e8"></div>
<div class="cb" style="left:12px;top:359px"></div>
<div class="c r" style="left:37px;width:124px;top:357px;text-align:right"><span>197</span></div>
<div class="c" style="left:184.5px;top:357px;"><span>Elfriede</span></div>
<div class="c" style="left:343.5px;top:357px;"><span>UK</span></div>
<div class="c" style="left:455.5px;top:357px;"><span>US Notes D...</span></div>
<div class="pink" style="left:544px;top:353px;width:132px;height:21px"></div>
<div class="c" style="left:688.5px;top:357px;"><span>Orange</span></div>
<div class="c" style="left:804.5px;top:357px;letter-spacing:-0.082px;"><span>ebakeley@bakele...</span></div>
<div class="c" style="left:930.5px;top:357px;"><span>Y</span></div>
<div class="c" style="left:1054.5px;top:357px;"><span>Bakeley</span></div>
<div class="c" style="left:1210.5px;top:357px;"><span>E3Z 2K5</span></div>
<div class="abs" style="left:0;top:396px;width:1285px;height:1px;background:#e3e5e8"></div>
<div class="cb" style="left:12px;top:381px"></div>
<div class="c r" style="left:37px;width:124px;top:379px;text-align:right"><span>198</span></div>
<div class="c" style="left:184.5px;top:379px;"><span>Trina</span></div>
<div class="c" style="left:343.5px;top:379px;"><span>AU</span></div>
<div class="c" style="left:455.5px;top:379px;"><span>US Notes D...</span></div>
<div class="pink" style="left:544px;top:375px;width:132px;height:21px"></div>
<div class="c" style="left:688.5px;top:379px;"><span>Orange</span></div>
<div class="c" style="left:804.5px;top:379px;letter-spacing:-0.029px;"><span>tbakey@bakey.co...</span></div>
<div class="c" style="left:930.5px;top:379px;"><span>Y</span></div>
<div class="c" style="left:1054.5px;top:379px;"><span>Bakey</span></div>
<div class="c" style="left:1210.5px;top:379px;"><span>47127</span></div>
<div class="abs" style="left:0;top:418px;width:1285px;height:1px;background:#e3e5e8"></div>
<div class="cb" style="left:12px;top:403px"></div>
<div class="c r" style="left:37px;width:124px;top:401px;text-align:right"><span>199</span></div>
<div class="c" style="left:184.5px;top:401px;"><span>Kris</span></div>
<div class="c" style="left:343.5px;top:401px;"><span>US</span></div>
<div class="c" style="left:455.5px;top:401px;"><span>US Notes D...</span></div>
<div class="pink" style="left:544px;top:397px;width:132px;height:21px"></div>
<div class="c" style="left:688.5px;top:401px;"><span>Orange</span></div>
<div class="c" style="left:804.5px;top:401px;"><span>kris_bala@gmail....</span></div>
<div class="c" style="left:930.5px;top:401px;"><span>ON</span></div>
<div class="c" style="left:1054.5px;top:401px;"><span>Bala</span></div>
<div class="c" style="left:1210.5px;top:401px;"><span>L7A 2E8</span></div>
<div class="abs" style="left:0;top:440px;width:1285px;height:1px;background:#e3e5e8"></div>
<div class="cb" style="left:12px;top:425px"></div>
<div class="c r" style="left:37px;width:124px;top:423px;text-align:right"><span>200</span></div>
<div class="c" style="left:184.5px;top:423px;"><span>Anabel</span></div>
<div class="c" style="left:343.5px;top:423px;"><span>UK</span></div>
<div class="c" style="left:455.5px;top:423px;letter-spacing:-0.268px;"><span>MASS UPDA...</span></div>
<div class="c r" style="left:544px;width:121px;top:423px;text-align:right"><span>5</span></div>
<div class="c" style="left:688.5px;top:423px;"><span>staina Ward</span></div>
<div class="c" style="left:804.5px;top:423px;"><span>anabel_baldock...</span></div>
<div class="c" style="left:930.5px;top:423px;"><span>Lancashire</span></div>
<div class="c" style="left:1054.5px;top:423px;"><span>Baldock</span></div>
<div class="c" style="left:1210.5px;top:423px;"><span>FY5 4FN</span></div>
<div class="abs" style="left:0;top:462px;width:1285px;height:1px;background:#e3e5e8"></div>
<div class="cb" style="left:12px;top:447px"></div>
<div class="c r" style="left:37px;width:124px;top:445px;text-align:right"><span>201</span></div>
<div class="c" style="left:184.5px;top:445px;"><span>Rebeca</span></div>
<div class="c" style="left:343.5px;top:445px;"><span>AU</span></div>
<div class="c" style="left:455.5px;top:445px;"><span>filling blanks</span></div>
<div class="c r" style="left:544px;width:121px;top:445px;text-align:right"><span>81</span></div>
<div class="c" style="left:688.5px;top:445px;"><span>Mirrool</span></div>
<div class="c" style="left:804.5px;top:445px;"><span>rebeca_baley@h...</span></div>
<div class="c" style="left:930.5px;top:445px;"><span>NS</span></div>
<div class="c" style="left:1054.5px;top:445px;"><span>Baley</span></div>
<div class="c" style="left:1210.5px;top:445px;"><span>2665</span></div>
<div class="abs" style="left:0;top:484px;width:1285px;height:1px;background:#e3e5e8"></div>
<div class="cb" style="left:12px;top:469px"></div>
<div class="c r" style="left:37px;width:124px;top:467px;text-align:right"><span>202</span></div>
<div class="c" style="left:184.5px;top:467px;"><span>Nickie</span></div>
<div class="c" style="left:343.5px;top:467px;"><span>CA</span></div>
<div class="c" style="left:455.5px;top:467px;"><span>CA Notes D...</span></div>
<div class="c r" style="left:544px;width:121px;top:467px;text-align:right"><span>5</span></div>
<div class="c" style="left:688.5px;top:467px;"><span>North Vancouver</span></div>
<div class="c" style="left:804.5px;top:467px;"><span>nickie.balonek@...</span></div>
<div class="c" style="left:1054.5px;top:467px;"><span>Balonek</span></div>
<div class="c" style="left:1210.5px;top:467px;"><span>V7J 3P8</span></div>
<div class="abs" style="left:0;top:506px;width:1285px;height:1px;background:#e3e5e8"></div>
<div class="cb" style="left:12px;top:491px"></div>
<div class="c r" style="left:37px;width:124px;top:489px;text-align:right"><span>203</span></div>
<div class="c" style="left:184.5px;top:489px;"><span>Aliza</span></div>
<div class="c" style="left:343.5px;top:489px;"><span>CA</span></div>
<div class="c" style="left:455.5px;top:489px;"><span>US Notes D...</span></div>
<div class="c r" style="left:544px;width:121px;top:489px;text-align:right"><span>45</span></div>
<div class="c" style="left:688.5px;top:489px;"><span>Northhampton</span></div>
<div class="c" style="left:1054.5px;top:489px;"><span>Baltimore</span></div>
<div class="c" style="left:1210.5px;top:489px;"><span>1060</span></div>
<div class="abs" style="left:36px;top:0;width:1px;height:498px;background:#e3e5e8"></div>
<div class="abs" style="left:172px;top:0;width:1px;height:498px;background:#e3e5e8"></div>
<div class="abs" style="left:331px;top:0;width:1px;height:498px;background:#e3e5e8"></div>
<div class="abs" style="left:443px;top:0;width:1px;height:498px;background:#e3e5e8"></div>
<div class="abs" style="left:543px;top:0;width:1px;height:498px;background:#e3e5e8"></div>
<div class="abs" style="left:676px;top:0;width:1px;height:498px;background:#e3e5e8"></div>
<div class="abs" style="left:792px;top:0;width:1px;height:498px;background:#e3e5e8"></div>
<div class="abs" style="left:918px;top:0;width:1px;height:498px;background:#e3e5e8"></div>
<div class="abs" style="left:1042px;top:0;width:1px;height:498px;background:#e3e5e8"></div>
<div class="abs" style="left:1198px;top:0;width:1px;height:498px;background:#e3e5e8"></div>
</div>
<div class="abs" style="left:1486px;top:323px;width:17px;height:498px;background:#f1f1f1"></div>
<div class="abs" style="left:1488px;top:340px;width:13px;height:105px;background:#c1c1c1"></div>
<svg class="abs" style="left:1490px;top:329px" width="9" height="5" viewBox="0 0 9 5"><path d="M0 5 L4.5 0 L9 5 Z" fill="#a3a3a3"/></svg>
<svg class="abs" style="left:1490px;top:808px" width="9" height="5" viewBox="0 0 9 5"><path d="M0 0 L4.5 5 L9 0 Z" fill="#505050"/></svg>
<div class="abs" style="left:201px;top:821px;width:1285px;height:17px;background:#f1f1f1"></div>
<div class="abs" style="left:218px;top:823px;width:634px;height:13px;background:#c1c1c1"></div>
<svg class="abs" style="left:206px;top:825px" width="5" height="9" viewBox="0 0 5 9"><path d="M5 0 L0 4.5 L5 9 Z" fill="#a3a3a3"/></svg>
<svg class="abs" style="left:1476px;top:825px" width="5" height="9" viewBox="0 0 5 9"><path d="M0 0 L5 4.5 L0 9 Z" fill="#505050"/></svg>
<div class="abs" style="left:1486px;top:821px;width:17px;height:17px;background:#fff"></div>
<div class="abs" style="left:200px;top:838px;width:1304px;height:3px;background:#bcc4c9"></div>
<div class="abs" style="left:200px;top:841px;width:1304px;height:22px;background:#eef1f5"></div>

<svg class="abs" style="left:796px;top:851px" width="10" height="10" viewBox="0 0 10 10"><path d="M0.6 0 V10 M8.5 0.6 L4 5 L8.5 9.4" fill="none" stroke="#c8c8c8" stroke-width="1"/></svg>
<svg class="abs" style="left:823px;top:851px" width="6" height="10" viewBox="0 0 6 10"><path d="M5.4 0.6 L1 5 L5.4 9.4" fill="none" stroke="#c8c8c8" stroke-width="1"/></svg>
<div class="tx" style="left:837px;top:850px;font-size:12px;color:#6a6a6a;line-height:14px">Page 1 of 20</div>
<svg class="abs" style="left:918px;top:851px" width="6" height="10" viewBox="0 0 6 10"><path d="M0.6 0.6 L5 5 L0.6 9.4" fill="none" stroke="#777" stroke-width="1"/></svg>
<svg class="abs" style="left:941px;top:851px" width="10" height="10" viewBox="0 0 10 10"><path d="M0.6 0.6 L5 5 L0.6 9.4 M8.5 0 V10" fill="none" stroke="#777" stroke-width="1"/></svg>
<div class="tx" style="left:1403px;top:850px;font-size:11.5px;color:#999;line-height:14px">1 to 100 of 1,992</div>
<div class="abs" style="left:0;top:863px;width:1518px;height:1px;background:#222"></div>
</body></html>
